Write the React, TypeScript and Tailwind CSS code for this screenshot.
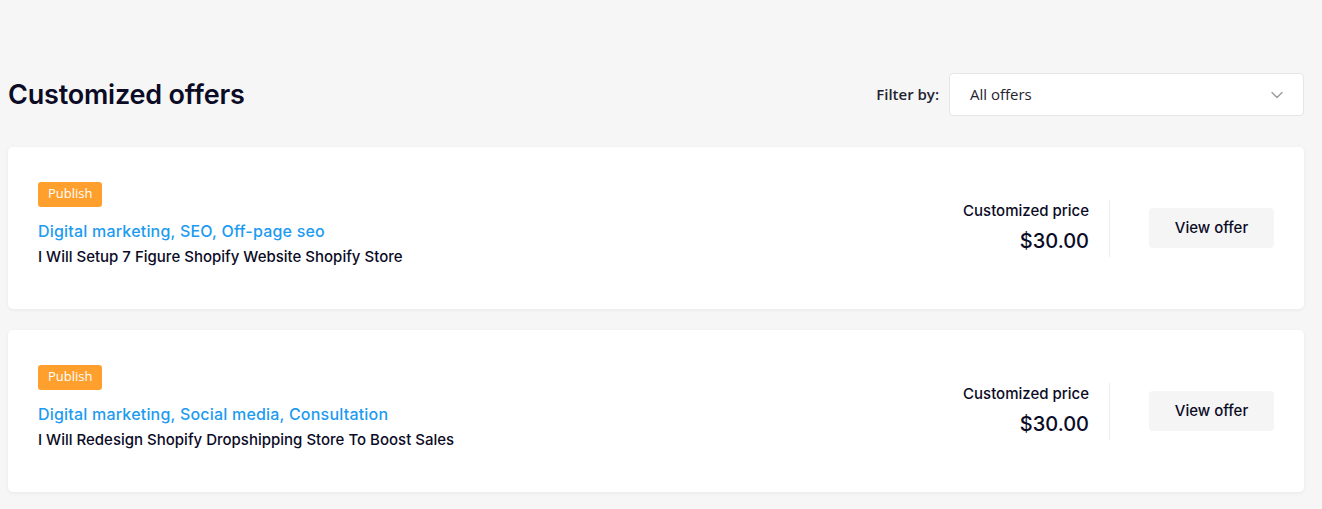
import { ChevronDown } from 'lucide-react'

const offers = [
  {
    status: 'Publish',
    tags: 'Digital marketing, SEO, Off-page seo',
    title: 'I Will Setup 7 Figure Shopify Website Shopify Store',
    price: '$30.00',
  },
  {
    status: 'Publish',
    tags: 'Digital marketing, Social media, Consultation',
    title: 'I Will Redesign Shopify Dropshipping Store To Boost Sales',
    price: '$30.00',
  },
]

const heading = { fontFamily: 'Inter, Lato, sans-serif' }
const body = { fontFamily: '"Open Sans", "Noto Sans", sans-serif' }

export default function App() {
  return (
    <div className="min-h-[509px] bg-[#f6f6f6] pl-2 pr-[18px] pt-[73px] pb-4" style={heading}>
      <div className="flex items-center justify-between h-[43px]">
        <h1 className="text-[27px] font-semibold text-[#0b0b26] leading-none tracking-[-0.2px]">Customized offers</h1>
        <div className="flex items-center gap-[10px]">
          <span className="text-[15px] font-semibold text-[#1f2330]" style={body}>Filter by:</span>
          <div className="w-[355px] h-[43px] bg-white border border-[#e6e6e6] rounded flex items-center justify-between pl-5 pr-4" style={body}>
            <span className="text-[15px] text-[#1f2330]">All offers</span>
            <ChevronDown className="w-5 h-5 text-[#9a9a9a]" strokeWidth={1.6} />
          </div>
        </div>
      </div>

      <div className="mt-[31px] flex flex-col gap-[21px]">
        {offers.map((o, i) => (
          <div key={i} className="h-[162px] bg-white rounded-[5px] shadow-[0_1px_4px_rgba(0,0,0,0.06)] flex items-center pl-[30px] pr-[30px]">
            <div className="flex-1 flex flex-col items-start mb-2">
              <span className="bg-[#ff9f2d] text-white text-[13px] rounded-[3px] h-[25px] px-[10px] flex items-center" style={body}>{o.status}</span>
              <div className="mt-[14px] text-[16px] font-medium text-[#1d9bf0] leading-5 tracking-[0.2px]">{o.tags}</div>
              <div className="mt-[6px] text-[15px] font-medium text-[#0b0b26] leading-5">{o.title}</div>
            </div>
            <div className="flex items-center">
              <div className="flex flex-col items-end pr-5 border-r border-[#ececec] h-[57px] justify-center">
                <span className="text-[15px] font-medium text-[#0b0b26] leading-5">Customized price</span>
                <span className="text-[20px] font-medium text-[#0b0b26] leading-7 mt-[6px]">{o.price}</span>
              </div>
              <button className="ml-[39px] w-[125px] h-[40px] bg-[#f5f5f5] rounded-[4px] text-[15px] font-medium text-[#0b0b26]">View offer</button>
            </div>
          </div>
        ))}
      </div>
    </div>
  )
}
